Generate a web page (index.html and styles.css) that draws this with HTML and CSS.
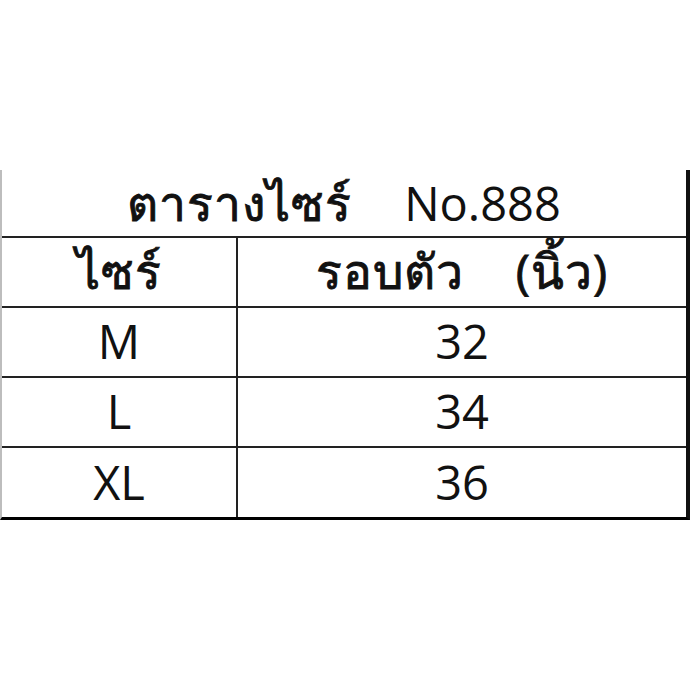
FILE: index.html
```html
<!DOCTYPE html>
<html lang="th">
<head>
<meta charset="utf-8">
<title>ตารางไซร์</title>
<link rel="stylesheet" href="styles.css">
</head>
<body>
<div class="sheet">
  <div class="size-table">
    <div class="row title-row">
      <div class="cell span"><span class="th">ตารางไซร์</span><span class="gap"></span>No.888</div>
    </div>
    <div class="row">
      <div class="cell"><span class="th">ไซร์</span></div>
      <div class="cell col2"><span class="th">รอบตัว</span><span class="gap"></span><span class="th">(นิ้ว)</span></div>
    </div>
    <div class="row">
      <div class="cell">M</div>
      <div class="cell col2">32</div>
    </div>
    <div class="row">
      <div class="cell">L</div>
      <div class="cell col2">34</div>
    </div>
    <div class="row last">
      <div class="cell">XL</div>
      <div class="cell col2">36</div>
    </div>
  </div>
</div>
</body>
</html>
```
FILE: styles.css
```css
html, body {
  margin: 0;
  padding: 0;
  background: #ffffff;
}
body {
  font-family: "Open Sans", "Noto Sans", sans-serif;
  color: #111111;
}
.sheet {
  width: 691px;
  height: 691px;
  padding-top: 170px;
  box-sizing: border-box;
}
.size-table {
  width: 690px;
  box-sizing: border-box;
  border-left: 2px solid #bdbdbd;
  border-right: 4px solid #111111;
  border-bottom: 3px solid #000000;
}
.row {
  display: grid;
  grid-template-columns: 234px 1fr;
  height: 70px;
  border-top: 2px solid #222222;
  box-sizing: border-box;
}
.title-row {
  grid-template-columns: 1fr;
  height: 66px;
  border-top: none;
}
.row.last {
  height: 71px;
}
.cell {
  display: flex;
  align-items: flex-end;
  justify-content: center;
  font-size: 47px;
  line-height: 1;
  padding-bottom: 11px;
  box-sizing: border-box;
  white-space: nowrap;
}
.title-row .cell {
  padding-bottom: 9px;
}
.th {
  font-weight: 400;
  font-size: 48px;
  letter-spacing: 1px;
  -webkit-text-stroke: 0.9px #111111;
}
.gap {
  display: inline-block;
  width: 52px;
}
.col2 {
  border-left: 2px solid #222222;
}
```
